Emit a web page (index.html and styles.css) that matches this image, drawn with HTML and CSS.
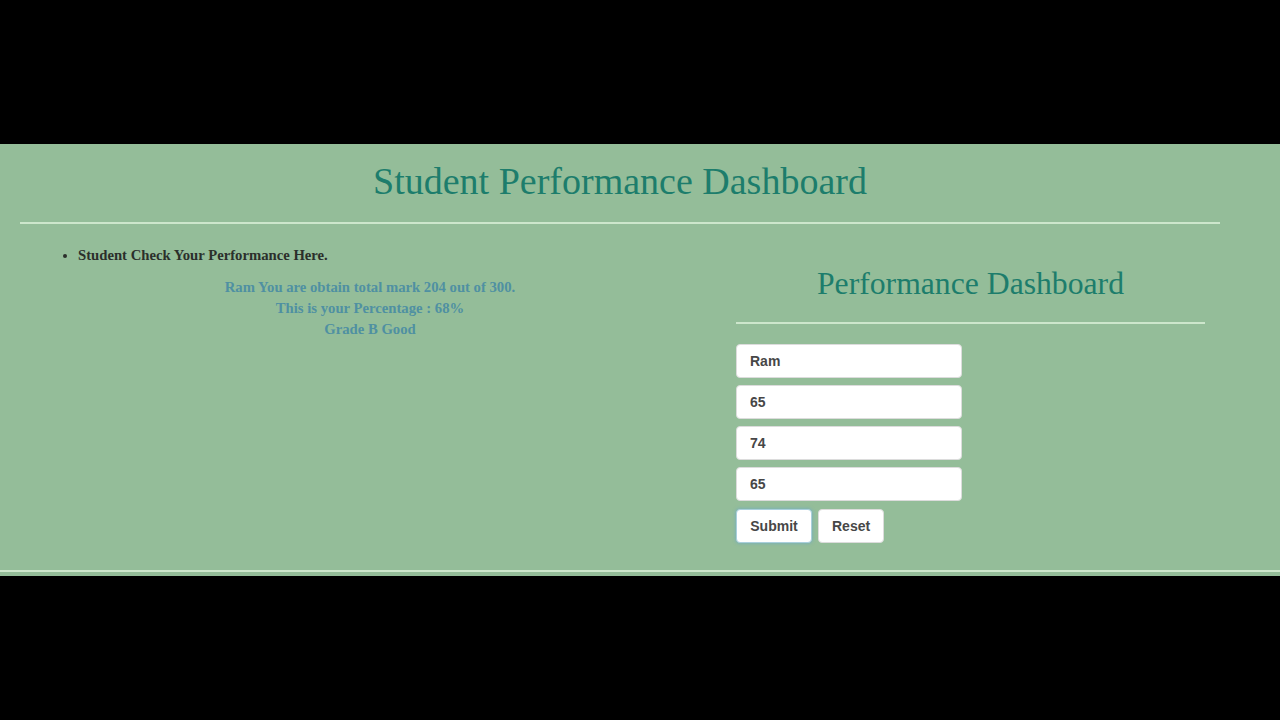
FILE: index.html
```html
<!DOCTYPE html>
<html lang="en">
<head>
<meta charset="utf-8">
<title>Student Performance Dashboard</title>
<link rel="stylesheet" href="styles.css">
</head>
<body>
<div class="frame">
  <header class="top">
    <h1 class="title">Student Performance Dashboard</h1>
    <hr class="rule">
  </header>
  <main class="content">
    <section class="left">
      <ul class="notes">
        <li>Student Check Your Performance Here.</li>
      </ul>
      <div class="result">
        <div>Ram You are obtain total mark 204 out of 300.</div>
        <div>This is your Percentage : 68%</div>
        <div>Grade B Good</div>
      </div>
    </section>
    <section class="right">
      <h2 class="subtitle">Performance Dashboard</h2>
      <hr class="rule sub">
      <form class="form">
        <input class="field" type="text" value="Ram">
        <input class="field" type="text" value="65">
        <input class="field" type="text" value="74">
        <input class="field" type="text" value="65">
        <div class="actions">
          <button type="button" class="btn focus">Submit</button>
          <button type="button" class="btn">Reset</button>
        </div>
      </form>
    </section>
  </main>
  <footer class="bottom"></footer>
</div>
</body>
</html>
```

FILE: styles.css
```css
html, body {
  margin: 0;
  padding: 0;
  background: #000;
}
body {
  width: 1280px;
  height: 720px;
  overflow: hidden;
}
.frame {
  margin-top: 144px;
  height: 432px;
  background: #94bd99;
  display: flex;
  flex-direction: column;
  font-family: "Liberation Serif", "Times New Roman", serif;
}
.top {
  padding: 0;
}
.title {
  margin: 0 60px 0 20px;
  padding-top: 15px;
  height: 63px;
  line-height: 44px;
  font-size: 38px;
  font-weight: normal;
  color: #1d7d6c;
  text-align: center;
}
.rule {
  border: 0;
  height: 2px;
  background: #cde6cc;
  margin: 0 60px 0 20px;
}
.content {
  display: grid;
  grid-template-columns: 700px 1fr;
  padding: 0 60px 0 20px;
}
.left {
  padding-top: 21px;
}
.notes {
  margin: 0;
  padding-left: 58px;
  font-size: 14.7px;
  font-weight: bold;
  line-height: 20px;
  color: #2b2f2b;
}
.result {
  margin-top: 12px;
  text-align: center;
  font-size: 14.7px;
  font-weight: bold;
  line-height: 21px;
  color: #4f90a2;
}
.right {
  padding: 42px 15px 0 16px;
}
.subtitle {
  margin: 0;
  height: 36px;
  line-height: 36px;
  font-size: 31.7px;
  font-weight: normal;
  color: #1d7d6c;
  text-align: center;
}
.rule.sub {
  margin: 20px 0 0 0;
}
.form {
  margin-top: 20px;
  display: flex;
  flex-direction: column;
  align-items: flex-start;
  gap: 7px;
}
.field {
  box-sizing: border-box;
  width: 226px;
  height: 34px;
  margin: 0;
  padding: 0 13px;
  border: 1px solid #dcdcdc;
  border-radius: 4px;
  background: #fff;
  font-family: "Liberation Sans", Arial, sans-serif;
  font-weight: bold;
  font-size: 14px;
  color: #474747;
  outline: none;
}
.actions {
  margin-top: 1px;
  display: flex;
  gap: 6px;
}
.btn {
  box-sizing: border-box;
  height: 34px;
  padding: 0 13px;
  border: 1px solid #dcdcdc;
  border-radius: 4px;
  background: #fff;
  font-family: "Liberation Sans", Arial, sans-serif;
  font-weight: bold;
  font-size: 14px;
  color: #474747;
}
.btn.focus {
  min-width: 76px;
  border-color: #a9cfdc;
  box-shadow: 0 0 3px 1px rgba(110, 170, 200, 0.55);
}
.bottom {
  margin-top: auto;
  height: 4px;
  border-top: 2px solid #cde6cc;
}
```
